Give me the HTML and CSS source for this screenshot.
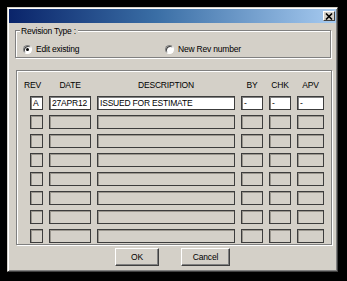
FILE: index.html
```html
<!DOCTYPE html>
<html lang="en">
<head>
    <meta charset="UTF-8">
    <meta name="viewport" content="width=device-width, initial-scale=1.0">
    <title>Revision</title>
    <link rel="stylesheet" href="styles.css">
</head>
<body>

    <div class="dialog">
        <!-- Title Bar -->
        <div class="titlebar">
            <span class="close-btn">
                <svg width="8" height="7" viewBox="0 0 8 7">
                    <path d="M1 0.5 L7 6.5 M7 0.5 L1 6.5" stroke="#000" stroke-width="1.6"/>
                </svg>
            </span>
        </div>

        <!-- Revision Type -->
        <div class="group group-type">
            <span class="group-title">Revision Type :</span>
            <div class="radios">
                <label class="radio-opt first">
                    <span class="radio checked"></span>
                    <span>Edit existing</span>
                </label>
                <label class="radio-opt">
                    <span class="radio"></span>
                    <span>New Rev number</span>
                </label>
            </div>
        </div>

        <!-- Revision Table -->
        <div class="group group-rev">
            <div class="rev-grid" id="revGrid">
                <div class="head head-rev">REV</div>
                <div class="head">DATE</div>
                <div class="head">DESCRIPTION</div>
                <div class="head">BY</div>
                <div class="head">CHK</div>
                <div class="head">APV</div>
            </div>
        </div>

        <div class="buttons">
            <button class="btn btn-ok">OK</button>
            <button class="btn btn-cancel">Cancel</button>
        </div>
    </div>

    <script>
        // Build revision rows
        let rows = [
            ['A', '27APR12', 'ISSUED FOR ESTIMATE', '-', '-', '-']
        ];
        let grid = document.getElementById('revGrid');

        for (let r = 0; r < 8; r++) {
            let data = rows[r];
            for (let c = 0; c < 6; c++) {
                let cell = document.createElement('div');
                cell.className = data ? 'field filled' : 'field';
                cell.textContent = data ? data[c] : '';
                grid.appendChild(cell);
            }
        }
    </script>
</body>
</html>
```

FILE: styles.css
```css
* {
    margin: 0;
    padding: 0;
    box-sizing: border-box;
    font-family: 'Liberation Sans', Arial, sans-serif;
}

body {
    background-color: #000;
    font-size: 8.5px;
    letter-spacing: -0.2px;
    color: #000;
}

/* Dialog window */
.dialog {
    margin: 7px 0 0 7px;
    width: 331px;
    height: 265px;
    background: #d4d0c8;
    border: 1px solid;
    border-color: #d4d0c8 #404040 #404040 #d4d0c8;
    box-shadow: inset 1px 1px #fff, inset -1px -1px #808080;
    padding: 1px;
}

.titlebar {
    height: 14px;
    background: linear-gradient(90deg, #0a246a, #3a6ea5 45%, #a6caf0);
    display: flex;
    justify-content: flex-end;
    align-items: center;
    padding-right: 1px;
}

.close-btn {
    width: 12px;
    height: 10px;
    background: #d4d0c8;
    border: 1px solid;
    border-color: #fff #404040 #404040 #fff;
    display: flex;
    justify-content: center;
    align-items: center;
}

/* Group boxes */
.group {
    position: relative;
    border: 1px solid #808080;
    box-shadow: inset 1px 1px #fff, 1px 1px #fff;
}

.group-type {
    margin: 7px 0 0 6px;
    width: 316px;
    height: 28px;
    padding-left: 7px;
}

.group-title {
    position: absolute;
    top: -5px;
    left: 4px;
    padding: 0 2px 0 1px;
    background: #d4d0c8;
    line-height: 10px;
}

.radios {
    margin-top: 13px;
    height: 10px;
    display: flex;
    align-items: center;
}

.radio-opt {
    display: flex;
    align-items: center;
    gap: 4px;
}

.radio-opt.first {
    width: 142px;
}

.radio {
    width: 9px;
    height: 9px;
    border-radius: 50%;
    background: #fff;
    border: 1px solid;
    border-color: #808080 #fff #fff #808080;
    box-shadow: inset 1px 1px #404040;
    display: flex;
    justify-content: center;
    align-items: center;
}

.radio.checked::after {
    content: '';
    width: 3px;
    height: 3px;
    border-radius: 50%;
    background: #000;
}

.group-rev {
    margin: 12px 0 0 7px;
    width: 316px;
    height: 175px;
}

/* Revision grid */
.rev-grid {
    margin: 8px 0 0 13px;
    display: grid;
    grid-template-columns: 13px 42px 138px 22px 22px 27px;
    grid-template-rows: 12px repeat(8, 14px);
    column-gap: 6px;
    row-gap: 5px;
}

.head {
    display: flex;
    justify-content: center;
    align-items: center;
    white-space: nowrap;
}

.head-rev {
    margin-left: -8px;
}

.field {
    border: 1px solid #3c3c3c;
    box-shadow: inset 1px 1px #9a968e;
    background: #d4d0c8;
    line-height: 12px;
    padding-left: 2px;
    white-space: nowrap;
    overflow: hidden;
}

.field.filled {
    background: #fff;
    box-shadow: inset 1px 1px #808080;
}

/* Buttons */
.buttons {
    margin-top: 3px;
    display: flex;
    justify-content: center;
    gap: 22px;
}

.btn {
    height: 18px;
    background: #d4d0c8;
    border: 1px solid;
    border-color: #fff #404040 #404040 #fff;
    box-shadow: inset -1px -1px #808080;
    font-size: 8.5px;
    letter-spacing: -0.2px;
    color: #000;
}

.btn-ok {
    width: 44px;
}

.btn-cancel {
    width: 49px;
}
```
